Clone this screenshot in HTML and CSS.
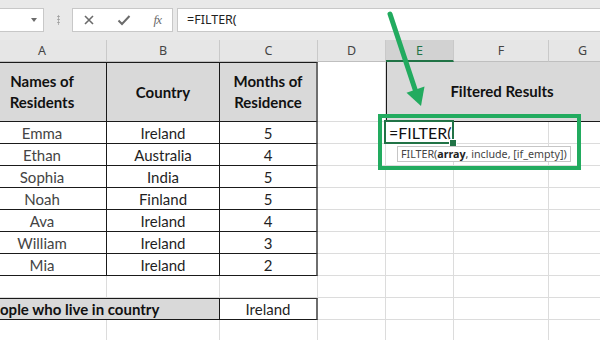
FILE: index.html
```html
<!DOCTYPE html>
<html lang="en">
<head>
  <meta charset="UTF-8" />
  <title>FILTER function</title>
  <link rel="stylesheet" href="styles.css">
</head>
<body>

  <!-- Formula bar -->
  <div class="toolbar">
    <div class="namebox"><span class="caret"></span></div>
    <div class="grip"></div>
    <div class="fx-buttons">
      <svg width="12" height="12" viewBox="0 0 12 12"><path d="M2 2 L10 10 M10 2 L2 10" stroke="#6b6b6b" stroke-width="1.6" fill="none"/></svg>
      <svg width="14" height="12" viewBox="0 0 14 12"><path d="M1.5 6.5 L5 10 L12.5 2" stroke="#6b6b6b" stroke-width="2" fill="none"/></svg>
      <span class="fx">fx</span>
    </div>
    <div class="formula">=FILTER(</div>
  </div>

  <!-- Sheet -->
  <div class="sheet">
    <div class="col">A</div>
    <div class="col">B</div>
    <div class="col">C</div>
    <div class="col">D</div>
    <div class="col selected">E</div>
    <div class="col">F</div>
    <div class="col">G</div>

    <div class="c t th">Names of<br>Residents</div>
    <div class="c t th">Country</div>
    <div class="c t th last">Months of<br>Residence</div>
    <div class="c"></div>
    <div class="c th results">Filtered Results</div>

    <div class="c t name">Emma</div><div class="c t">Ireland</div><div class="c t last">5</div><div class="c"></div>
    <div class="c active">=FILTER(<span class="cursor"></span>
      <div class="tip">FILTER(<b>array</b>, include, [if_empty])</div>
    </div>
    <div class="c"></div><div class="c"></div>

    <div class="c t name">Ethan</div><div class="c t">Australia</div><div class="c t last">4</div><div class="c"></div><div class="c"></div><div class="c"></div><div class="c"></div>
    <div class="c t name">Sophia</div><div class="c t">India</div><div class="c t last">5</div><div class="c"></div><div class="c"></div><div class="c"></div><div class="c"></div>
    <div class="c t name">Noah</div><div class="c t">Finland</div><div class="c t last">5</div><div class="c"></div><div class="c"></div><div class="c"></div><div class="c"></div>
    <div class="c t name">Ava</div><div class="c t">Ireland</div><div class="c t last">4</div><div class="c"></div><div class="c"></div><div class="c"></div><div class="c"></div>
    <div class="c t name">William</div><div class="c t">Ireland</div><div class="c t last">3</div><div class="c"></div><div class="c"></div><div class="c"></div><div class="c"></div>
    <div class="c t name">Mia</div><div class="c t">Ireland</div><div class="c t last">2</div><div class="c"></div><div class="c"></div><div class="c"></div><div class="c"></div>

    <div class="c"></div><div class="c"></div><div class="c"></div><div class="c"></div><div class="c"></div><div class="c"></div><div class="c"></div>

    <div class="c t box th label">ople who live in country</div>
    <div class="c t box last">Ireland</div>
    <div class="c"></div><div class="c"></div><div class="c"></div><div class="c"></div>

    <div class="c"></div><div class="c"></div><div class="c"></div><div class="c"></div><div class="c"></div><div class="c"></div><div class="c"></div>
  </div>

  <!-- Green callout drawn over the sheet -->
  <svg class="callout" width="600" height="340" viewBox="0 0 600 340">
    <rect x="380" y="116" width="199" height="52" fill="none" stroke="#22ab5f" stroke-width="4"/>
    <line x1="390" y1="14" x2="415.6" y2="91" stroke="#22ab5f" stroke-width="5" stroke-linecap="round"/>
    <polygon points="421,106 424.5,86.5 406.5,92.8" fill="#22ab5f"/>
  </svg>

</body>
</html>
```

FILE: styles.css
```css
* {
  box-sizing: border-box;
}
body {
  margin: 0;
  width: 600px;
  height: 340px;
  overflow: hidden;
  position: relative;
  background: #ffffff;
  font-family: Lato, 'Liberation Sans', sans-serif;
}

/* formula bar */
.toolbar {
  height: 40px;
  padding-top: 8px;
  background: #e9e9e9;
  display: flex;
  align-items: flex-start;
}
.namebox {
  width: 45px;
  height: 24px;
  margin-left: -1px;
  background: #fff;
  border: 1px solid #c8c8c8;
  position: relative;
}
.caret {
  position: absolute;
  right: 6px;
  top: 9px;
  border-left: 3.5px solid transparent;
  border-right: 3.5px solid transparent;
  border-top: 4px solid #6b6b6b;
}
.grip {
  width: 28px;
  height: 24px;
  padding: 7px 0;
  background: radial-gradient(circle, #a0a0a0 0.9px, transparent 1.3px);
  background-size: 3px 3px;
  background-repeat: repeat-y;
  background-position: center top;
  background-clip: content-box;
  background-origin: content-box;
}
.fx-buttons {
  width: 101px;
  height: 24px;
  background: #fff;
  border: 1px solid #c8c8c8;
  display: flex;
  align-items: center;
  justify-content: space-between;
  padding: 0 11px 0 10px;
}
.fx {
  font-family: 'Liberation Serif', serif;
  font-style: italic;
  font-size: 13px;
  color: #6b6b6b;
  letter-spacing: -1px;
}
.formula {
  flex: 1;
  margin-left: 4px;
  height: 24px;
  background: #fff;
  border: 1px solid #c8c8c8;
  border-right: none;
  padding-left: 9px;
  font-family: 'Noto Sans', sans-serif;
  font-size: 12.5px;
  line-height: 22px;
  color: #222;
}

/* grid */
.sheet {
  margin-left: -22px;
  display: grid;
  grid-template-columns: 129px 113px 98px 68px 68px 95px 68px;
  grid-template-rows: 22px 60px repeat(10, 22px);
}
.col {
  background: #e6e6e6;
  border-right: 1px solid #c9c9c9;
  border-bottom: 1px solid #bfbfbf;
  display: flex;
  align-items: center;
  justify-content: center;
  font-family: 'Noto Sans', sans-serif;
  font-size: 12.5px;
  color: #444;
}
.col.selected {
  background: #d2d2d2;
  color: #217346;
  border-bottom: 2px solid #217346;
}
.c {
  border-right: 1px solid #dcdcdc;
  border-bottom: 1px solid #dcdcdc;
  display: flex;
  align-items: center;
  justify-content: center;
  font-size: 15px;
  color: #1f1f1f;
  white-space: nowrap;
}
.t {
  border-right-color: #1a1a1a;
  border-bottom-color: #1a1a1a;
}
.th {
  background: #d9d9d9;
  font-weight: bold;
  text-align: center;
  line-height: 21px;
  color: #111;
}
.t.th {
  border-top: 1px solid #1a1a1a;
}
.last {
  border-right: 2px solid #6e6e6e;
}
.name {
  color: #444;
}
.results {
  grid-column: span 3;
  border-left: 1px solid #1a1a1a;
  border-bottom-color: #1a1a1a;
  border-right: none;
}
.box {
  border-top: 1px solid #333;
}
.label {
  grid-column: span 2;
  justify-content: flex-start;
  padding-left: 22px;
  border-top-color: #333;
}

/* active cell */
.active {
  position: relative;
  justify-content: flex-start;
  padding-left: 3px;
  font-family: Lato, sans-serif;
  font-size: 16px;
  color: #111;
  overflow: visible;
}
.active::after {
  content: "";
  position: absolute;
  inset: -2px -1px -1px -2px;
  border: 2px solid #217346;
}
.active::before {
  content: "";
  position: absolute;
  right: -4px;
  bottom: -4px;
  width: 6px;
  height: 6px;
  background: #217346;
  border: 1px solid #fff;
  z-index: 2;
}
.cursor {
  display: inline-block;
  width: 1px;
  height: 17px;
  margin-left: 2px;
  background: #111;
}
.tip {
  position: absolute;
  left: 11px;
  top: 24px;
  height: 16px;
  padding: 0 3px;
  background: #fff;
  border: 1px solid #c6c6c6;
  font-family: 'Noto Sans', sans-serif;
  font-size: 10.7px;
  line-height: 14px;
  color: #444;
  z-index: 3;
}
.tip b {
  color: #222;
}

.callout {
  position: absolute;
  top: 0;
  left: 0;
  pointer-events: none;
}
```
